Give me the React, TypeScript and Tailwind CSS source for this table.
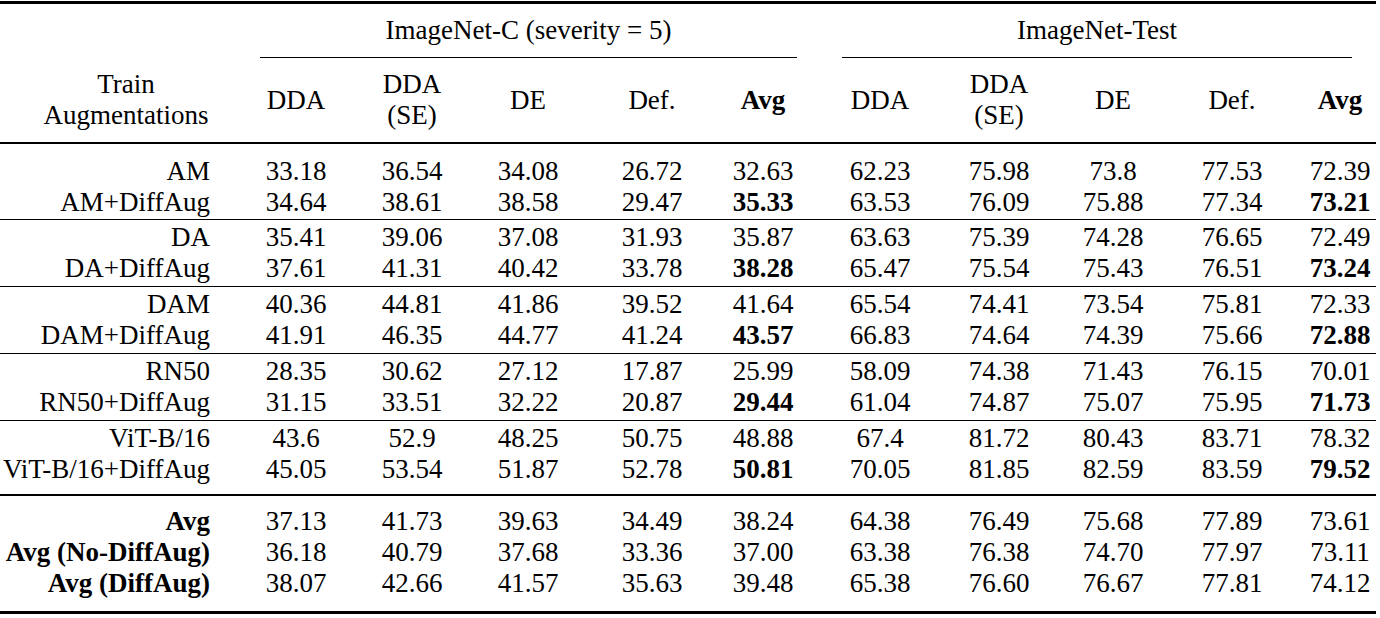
import React from 'react'

type Row = { label: string; vals: string[]; boldLabel?: boolean; boldAvg?: boolean }

// widths of the ten data columns (the spacer between the two blocks is added separately)
const COLS = [
  'w-[116px]',
  'w-[116px]',
  'w-[116px]',
  'w-[132px]',
  'w-[90px]',
  'w-[120px]',
  'w-[118px]',
  'w-[110px]',
  'w-[128px]',
  'w-[80px] pl-[8px]',
]

const groups: { rows: Row[]; className: string }[] = [
  {
    className: 'pt-[12px] pb-[1px] border-b border-black',
    rows: [
      { label: 'AM', vals: ['33.18', '36.54', '34.08', '26.72', '32.63', '62.23', '75.98', '73.8', '77.53', '72.39'] },
      { label: 'AM+DiffAug', boldAvg: true, vals: ['34.64', '38.61', '38.58', '29.47', '35.33', '63.53', '76.09', '75.88', '77.34', '73.21'] },
    ],
  },
  {
    className: 'pt-[2px] pb-[2px] border-b border-black',
    rows: [
      { label: 'DA', vals: ['35.41', '39.06', '37.08', '31.93', '35.87', '63.63', '75.39', '74.28', '76.65', '72.49'] },
      { label: 'DA+DiffAug', boldAvg: true, vals: ['37.61', '41.31', '40.42', '33.78', '38.28', '65.47', '75.54', '75.43', '76.51', '73.24'] },
    ],
  },
  {
    className: 'pt-[2px] pb-[2px] border-b border-black',
    rows: [
      { label: 'DAM', vals: ['40.36', '44.81', '41.86', '39.52', '41.64', '65.54', '74.41', '73.54', '75.81', '72.33'] },
      { label: 'DAM+DiffAug', boldAvg: true, vals: ['41.91', '46.35', '44.77', '41.24', '43.57', '66.83', '74.64', '74.39', '75.66', '72.88'] },
    ],
  },
  {
    className: 'pt-[2px] pb-[2px] border-b border-black',
    rows: [
      { label: 'RN50', vals: ['28.35', '30.62', '27.12', '17.87', '25.99', '58.09', '74.38', '71.43', '76.15', '70.01'] },
      { label: 'RN50+DiffAug', boldAvg: true, vals: ['31.15', '33.51', '32.22', '20.87', '29.44', '61.04', '74.87', '75.07', '75.95', '71.73'] },
    ],
  },
  {
    className: 'pt-[2px] pb-[9px] border-b-2 border-black',
    rows: [
      { label: 'ViT-B/16', vals: ['43.6', '52.9', '48.25', '50.75', '48.88', '67.4', '81.72', '80.43', '83.71', '78.32'] },
      { label: 'ViT-B/16+DiffAug', boldAvg: true, vals: ['45.05', '53.54', '51.87', '52.78', '50.81', '70.05', '81.85', '82.59', '83.59', '79.52'] },
    ],
  },
  {
    className: 'pt-[10px] pb-[12px] border-b-[3px] border-black',
    rows: [
      { label: 'Avg', boldLabel: true, vals: ['37.13', '41.73', '39.63', '34.49', '38.24', '64.38', '76.49', '75.68', '77.89', '73.61'] },
      { label: 'Avg (No-DiffAug)', boldLabel: true, vals: ['36.18', '40.79', '37.68', '33.36', '37.00', '63.38', '76.38', '74.70', '77.97', '73.11'] },
      { label: 'Avg (DiffAug)', boldLabel: true, vals: ['38.07', '42.66', '41.57', '35.63', '39.48', '65.38', '76.60', '76.67', '77.81', '74.12'] },
    ],
  },
]

const subHeads: { top: string; bottom?: string; bold?: boolean }[] = [
  { top: 'DDA' },
  { top: 'DDA', bottom: '(SE)' },
  { top: 'DE' },
  { top: 'Def.' },
  { top: 'Avg', bold: true },
]

function Cells({ vals }: { vals: React.ReactNode[] }) {
  return (
    <>
      {vals.map((v, i) => (
        <React.Fragment key={i}>
          {i === 5 && <div className="w-[12px] shrink-0" />}
          <div className={`${COLS[i]} shrink-0 flex items-center justify-center`}>{v}</div>
        </React.Fragment>
      ))}
    </>
  )
}

function DataRow({ row }: { row: Row }) {
  return (
    <div className="flex h-[31px]">
      <div
        className={`w-[238px] shrink-0 pr-[28px] text-right whitespace-nowrap font-['Liberation_Serif'] ${
          row.boldLabel ? 'font-bold' : ''
        }`}
      >
        {row.label}
      </div>
      <Cells
        vals={row.vals.map((v, i) => (
          <span
            key={i}
            className={`font-['Liberation_Serif'] ${row.boldAvg && (i === 4 || i === 9) ? 'font-bold' : ''}`}
          >
            {v}
          </span>
        ))}
      />
    </div>
  )
}

export default function App() {
  const heads = [...subHeads, ...subHeads].map((h, i) => (
    <div key={i} className={`flex flex-col items-center font-['Liberation_Serif'] ${h.bold ? 'font-bold' : ''}`}>
      <span>{h.top}</span>
      {h.bottom && <span>{h.bottom}</span>}
    </div>
  ))

  return (
    <div className="w-[1380px] h-[618px] bg-white text-black text-[27px] leading-[31px] font-['Liberation_Serif']">
      <div className="w-[1376px] pt-[1px]">
        <div className="border-t-[3px] border-black" />

        {/* header */}
        <div className="border-b-2 border-black">
          <div className="flex">
            <div className="w-[238px] shrink-0" />
            <div className="w-[570px] shrink-0">
              <div className="ml-[22px] mr-[11px] h-[54px] border-b border-black flex items-center justify-center whitespace-nowrap font-['Liberation_Serif']">
                ImageNet-C (severity = 5)
              </div>
            </div>
            <div className="w-[568px] shrink-0">
              <div className="ml-[34px] mr-[24px] h-[54px] border-b border-black flex items-center justify-center whitespace-nowrap font-['Liberation_Serif']">
                ImageNet-Test
              </div>
            </div>
          </div>
          <div className="flex h-[84px]">
            <div className="w-[238px] shrink-0 pl-[14px] flex flex-col items-center justify-center font-['Liberation_Serif']">
              <span>Train</span>
              <span>Augmentations</span>
            </div>
            <Cells vals={heads} />
          </div>
        </div>

        {/* body */}
        {groups.map((g, gi) => (
          <div key={gi} className={g.className}>
            {g.rows.map((r) => (
              <DataRow key={r.label} row={r} />
            ))}
          </div>
        ))}
      </div>
    </div>
  )
}
